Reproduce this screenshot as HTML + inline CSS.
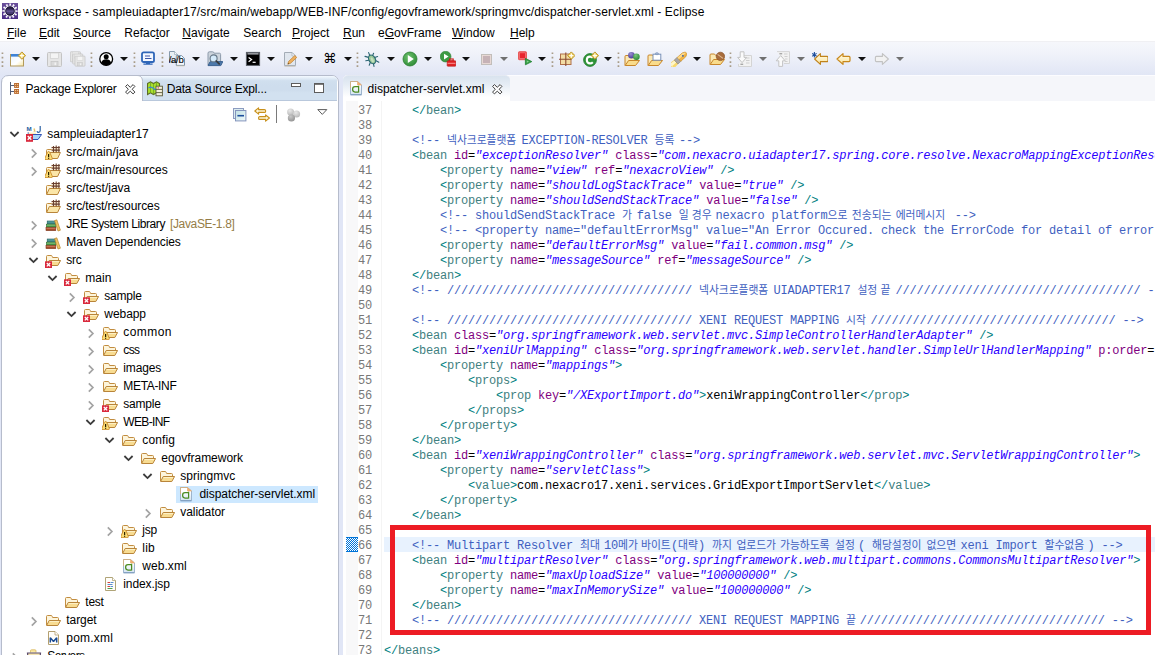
<!DOCTYPE html>
<html lang="ko"><head><meta charset="utf-8"><title>Eclipse</title>
<style>
*{box-sizing:border-box}
html,body{margin:0;padding:0}
body{width:1155px;height:655px;overflow:hidden;position:relative;background:#e1e6f6;font-family:"Liberation Sans","NanumGothic",sans-serif;font-size:12px;color:#000}
div,span,svg{position:absolute}
.cl span,.tx span{position:static}
#title{left:0;top:0;width:1155px;height:22px;background:#fff}
#title .tt{left:23px;top:5px;line-height:14px;white-space:nowrap;letter-spacing:0.13px}
#menu{left:0;top:22px;width:1155px;height:19px;background:#fff}
#menu span{top:4px;line-height:14px;white-space:nowrap}
#menu u{text-decoration:underline;text-underline-offset:1px}
#tb{left:0;top:41px;width:1155px;height:34px;background:linear-gradient(#f6f7fb 0,#f1f3fa 30%,#e1e6f5 100%);border-top:1px solid #f0f0f3}
#tb svg{top:9px}
.grip{position:absolute;width:2px;height:16px;top:9.5px;background:repeating-linear-gradient(#aca08c 0 1.6px,transparent 1.6px 4.6px)}
#tb svg.dd{top:15px}
/* left panel */
#lp{left:1px;top:75px;width:338px;height:590px;background:#fff;border:1px solid #b6bccc;border-radius:7px 7px 0 0;overflow:hidden}
#lp .strip{left:0;top:0;width:335px;height:25px;background:linear-gradient(#f3f9ff 0,#d0dfee 20%,#cedded 45%,#cedded 60%,#d2e1f0 70%,#d2e1f0 100%)}
#lp .strip{border-bottom:1px solid #b9c8dc}
#lp svg.tab{left:-1px;top:-1px}
.tx{white-space:nowrap;line-height:18px;top:0;height:18px}
.tr{left:0;width:340px;height:18px}
.tr .ic{top:1px;width:16px;height:16px}
.tr .ic svg{left:0;top:0}
.tr .ar{top:5px}
.tr svg.ar[height="11"]{top:4.5px}
.selbg{position:absolute;top:0.5px;width:142px;height:17px;background:#cde8ff}
.dec{color:#957d47;margin-left:2px}
/* editor */
#ed{left:343px;top:75px;width:820px;height:590px;background:#fff;border-radius:5px 0 0 0;overflow:hidden}
#edstrip{left:343px;top:75px;width:812px;height:26px;background:#f5f6fa;border-top:1px solid #fcfcff;border-radius:5px 0 0 0}
#edtab{left:343px;top:75px;width:167px;height:26px;background:linear-gradient(#d9e3ee 0,#e6edf5 35%,#fff 85%);border-radius:5px 5px 0 0;border-top:1px solid #e4e9f2}
#ruler{left:346px;top:101px;width:12px;height:560px;background:#f8f8f9}
#lnsep{left:381px;top:101px;width:1px;height:560px;background:#f4f4f4}
.ln{left:358px;width:14px;height:15px;line-height:15px;font-family:"Liberation Mono",monospace;font-size:12px;letter-spacing:-0.2px;color:#787878;white-space:pre}
.cl{height:15px;line-height:15px;font-family:"Liberation Mono","NanumGothic",monospace;font-size:12px;letter-spacing:-0.2px;white-space:pre;color:#000}
.c{color:#3f5fbf}.b{color:#008080}.t{color:#3f7f7f}.a{color:#7f007f}.v{color:#2a00ff;font-style:italic}
.cl span.k{display:inline-block;position:relative;top:0px;font-family:"Liberation Mono","Noto Sans CJK KR","NanumGothic",monospace;font-size:10.8px;letter-spacing:-0.05px;white-space:pre;vertical-align:top;height:15px;line-height:15px;overflow:visible}
#curline{left:384px;top:537px;width:780px;height:15px;background:#e8f2fe}
#mark{left:346px;top:537px;width:12px;height:15px;background-color:#0074d9;background-image:conic-gradient(#fff 25%,transparent 0 50%,#fff 0 75%,transparent 0);background-size:2px 2px;background-position:0 1px;border-top:1px solid #0074d9;border-bottom:1px solid #0074d9}
#red{left:390px;top:525px;width:761px;height:110px;border:5px solid #ed1c24}
</style></head><body>
<div id="title">
<svg style="left:2px;top:3px" width="16" height="16" viewBox="0 0 16 16"><defs><linearGradient id="gec" x1="0" y1="0" x2="0" y2="1"><stop offset="0" stop-color="#6a4f9a"/><stop offset="1" stop-color="#4a2c86"/></linearGradient></defs><rect width="16" height="16" fill="url(#gec)"/><circle cx="8" cy="8" r="6.6" fill="none" stroke="#fff" stroke-width="2" stroke-dasharray="1.728 1.728" stroke-dashoffset="0.864"/><circle cx="8" cy="8" r="5.6" fill="#fff"/><circle cx="8" cy="8" r="4.5" fill="#2a2148"/><path d="M4 7.2 H12 M3.8 8.6 H12.2 M4.2 10 H11.8" stroke="#7a68b0" stroke-width="0.8"/><circle cx="8" cy="8" r="4.3" fill="none" stroke="#1e1838" stroke-width="0.9"/></svg>
<span class="tt">workspace - sampleuiadapter17/src/main/webapp/WEB-INF/config/egovframework/springmvc/dispatcher-servlet.xml - Eclipse</span>
</div>
<div id="menu">
<span style="left:7px"><u>F</u>ile</span><span style="left:39px"><u>E</u>dit</span><span style="left:73px"><u>S</u>ource</span><span style="left:124.3px">Refac<u>t</u>or</span><span style="left:182.3px"><u>N</u>avigate</span><span style="left:243.3px">Search</span><span style="left:292px"><u>P</u>roject</span><span style="left:343px"><u>R</u>un</span><span style="left:378px">e<u>G</u>ovFrame</span><span style="left:452px"><u>W</u>indow</span><span style="left:510px"><u>H</u>elp</span>
</div>
<div id="tb">
<svg style="left:1.2px" width="3" height="16" viewBox="0 0 3 16"><path d="M0.6 1.4h1.7v1.7h-1.7z M0.6 5.8h1.7v1.7h-1.7z M0.6 10.2h1.7v1.7h-1.7z M0.6 14.3h1.7v1.7h-1.7z" fill="#a89c88"/></svg>
<svg style="left:10px" width="16" height="16" viewBox="0 0 16 16"><defs><linearGradient id="gnw" x1="0" y1="0" x2="1" y2="1"><stop offset="0" stop-color="#eaf4ff"/><stop offset="0.6" stop-color="#fff"/><stop offset="1" stop-color="#f7e6a0"/></linearGradient></defs><rect x="0.5" y="3.5" width="13" height="11.5" fill="url(#gnw)" stroke="#b39a5c"/><rect x="1" y="3" width="12" height="2.6" fill="#3d82d6"/><path d="M8.2 4.6 l3.7 -3.7 l3.7 3.7 l-3.7 3.7 z" fill="#ecc850" stroke="#b8922a" stroke-width="0.9"/><path d="M9.8 4.6 h4.2 M11.9 2.5 v4.2" stroke="#fffef4" stroke-width="1.3"/></svg>
<svg class="dd" style="left:32px" width="8" height="4" viewBox="0 0 8 4"><path d="M0 0 H8 L4 4Z" fill="#111"/></svg>
<svg style="left:47px" width="16" height="16" viewBox="0 0 16 16"><path d="M1.5 1.5 h12 q1 0 1 1 v12 q0 1 -1 1 h-12 q-1 0 -1 -1 v-12 q0 -1 1 -1z" fill="#e6e6e6" stroke="#c4c4c4"/><rect x="3.5" y="2" width="8" height="5.5" fill="#f4f4f4" stroke="#cfcfcf" stroke-width="0.7"/><rect x="4" y="10.5" width="7" height="4.5" fill="#dadada" stroke="#c4c4c4" stroke-width="0.7"/><rect x="7.5" y="11.5" width="1.6" height="2.6" fill="#f2f2f2"/></svg>
<svg style="left:70px" width="16" height="16" viewBox="0 0 16 16"><g transform="scale(0.72)"><path d="M1.5 1 h12 q1 0 1 1 v12 q0 1 -1 1 h-12 q-1 0 -1 -1 v-12 q0 -1 1 -1z" fill="#e6e6e6" stroke="#c4c4c4"/><rect x="3.5" y="1.5" width="8" height="5.5" fill="#f4f4f4" stroke="#cfcfcf" stroke-width="0.7"/><rect x="4" y="10" width="7" height="4.5" fill="#dadada" stroke="#c4c4c4" stroke-width="0.7"/><rect x="7.5" y="11" width="1.6" height="2.6" fill="#f2f2f2"/></g><g transform="translate(2.3,2.2) scale(0.72)"><path d="M1.5 1 h12 q1 0 1 1 v12 q0 1 -1 1 h-12 q-1 0 -1 -1 v-12 q0 -1 1 -1z" fill="#e6e6e6" stroke="#c4c4c4"/><rect x="3.5" y="1.5" width="8" height="5.5" fill="#f4f4f4" stroke="#cfcfcf" stroke-width="0.7"/><rect x="4" y="10" width="7" height="4.5" fill="#dadada" stroke="#c4c4c4" stroke-width="0.7"/><rect x="7.5" y="11" width="1.6" height="2.6" fill="#f2f2f2"/></g><g transform="translate(4.6,4.4) scale(0.72)"><path d="M1.5 1 h12 q1 0 1 1 v12 q0 1 -1 1 h-12 q-1 0 -1 -1 v-12 q0 -1 1 -1z" fill="#e6e6e6" stroke="#c4c4c4"/><rect x="3.5" y="1.5" width="8" height="5.5" fill="#f4f4f4" stroke="#cfcfcf" stroke-width="0.7"/><rect x="4" y="10" width="7" height="4.5" fill="#dadada" stroke="#c4c4c4" stroke-width="0.7"/><rect x="7.5" y="11" width="1.6" height="2.6" fill="#f2f2f2"/></g></svg>
<svg style="left:90.2px" width="3" height="16" viewBox="0 0 3 16"><path d="M0.6 1.4h1.7v1.7h-1.7z M0.6 5.8h1.7v1.7h-1.7z M0.6 10.2h1.7v1.7h-1.7z M0.6 14.3h1.7v1.7h-1.7z" fill="#a89c88"/></svg>
<svg style="left:99px" width="16" height="16" viewBox="0 0 16 16"><circle cx="7.2" cy="8" r="6.4" fill="#fff" stroke="#000" stroke-width="1.3"/><circle cx="7.2" cy="5.8" r="2.5" fill="#000"/><path d="M2.3 12 Q2.8 8.2 7.2 8.2 Q11.6 8.2 12.1 12 Q10 14.4 7.2 14.4 Q4.4 14.4 2.3 12Z" fill="#000"/></svg>
<svg class="dd" style="left:120px" width="8" height="4" viewBox="0 0 8 4"><path d="M0 0 H8 L4 4Z" fill="#111"/></svg>
<svg style="left:132.7px" width="3" height="16" viewBox="0 0 3 16"><path d="M0.6 1.4h1.7v1.7h-1.7z M0.6 5.8h1.7v1.7h-1.7z M0.6 10.2h1.7v1.7h-1.7z M0.6 14.3h1.7v1.7h-1.7z" fill="#a89c88"/></svg>
<svg style="left:141px" width="16" height="16" viewBox="0 0 16 16"><rect x="1" y="1.4" width="12" height="9.6" rx="1.6" fill="#f4f8ff" stroke="#2f66b8" stroke-width="1.8"/><path d="M4 5 H9 M4 7.5 H10.5" stroke="#3c55a8" stroke-width="1"/><path d="M5 11.5 H9 V12.6 H11.6 V13.8 H2.4 V12.6 H5Z" fill="#2f66b8"/></svg>
<svg style="left:160.7px" width="3" height="16" viewBox="0 0 3 16"><path d="M0.6 1.4h1.7v1.7h-1.7z M0.6 5.8h1.7v1.7h-1.7z M0.6 10.2h1.7v1.7h-1.7z M0.6 14.3h1.7v1.7h-1.7z" fill="#a89c88"/></svg>
<svg style="left:169px" width="16" height="16" viewBox="0 0 16 16"><path d="M0.5 0.5 H5.5 L8.5 3.5 V11 H0.5Z" fill="#e8eef4" stroke="#7c90a4" stroke-width="0.9"/><path d="M5.5 0.5 V3.5 H8.5" fill="#f8fafc" stroke="#9cacbc" stroke-width="0.7"/><path d="M7.3 4.6 H12.6 L15.5 7.4 V14.4 H7.3Z" fill="#f6f9fc" stroke="#74889c" stroke-width="0.9"/><path d="M7.3 15 H15.5" stroke="#d8ccb0" stroke-width="0.6"/><text x="-0.3" y="12.4" font-family="Liberation Sans,sans-serif" font-size="9.6" fill="#000" stroke="#000" stroke-width="0.1" letter-spacing="-0.3">/a/b</text></svg>
<svg class="dd" style="left:192px" width="8" height="4" viewBox="0 0 8 4"><path d="M0 0 H8 L4 4Z" fill="#111"/></svg>
<svg style="left:207px" width="16" height="16" viewBox="0 0 16 16"><path d="M1 14 V2.2 Q1 0.8 2.4 0.8 H5.6 Q6.8 0.8 7.2 2.2 H12.4 Q13.6 2.2 13.6 3.4 V11" fill="#ccd4dc" stroke="#8c9aaa"/><path d="M1 14.6 L3.2 10.6 H15.8 L13.8 14.6Z" fill="#4d79aa" stroke="#3c6290" stroke-linejoin="round"/><circle cx="6.6" cy="7.4" r="3.5" fill="#d4eafa" stroke="#667888" stroke-width="1.1"/><path d="M9.2 10 L12.2 12.8" stroke="#3a3a3a" stroke-width="1.7" stroke-linecap="round"/></svg>
<svg class="dd" style="left:230px" width="8" height="4" viewBox="0 0 8 4"><path d="M0 0 H8 L4 4Z" fill="#111"/></svg>
<svg style="left:245px" width="16" height="16" viewBox="0 0 16 16"><rect x="1.4" y="1.4" width="13.2" height="13" fill="#000" stroke="#5a6068" stroke-width="1"/><rect x="2.4" y="2.2" width="11.2" height="1.3" fill="#b8bcc4"/><path d="M3.6 6.4 L6.6 8.6 L3.6 10.8" fill="none" stroke="#fff" stroke-width="1.2"/><path d="M7.6 11.3 H10.6" stroke="#fff" stroke-width="1.2"/></svg>
<svg class="dd" style="left:267px" width="8" height="4" viewBox="0 0 8 4"><path d="M0 0 H8 L4 4Z" fill="#111"/></svg>
<svg style="left:283px" width="16" height="16" viewBox="0 0 16 16"><path d="M1.5 1.5 H9 L12.5 5 V14.5 H1.5Z" fill="#e0e6ee" stroke="#a4acb6"/><path d="M9 1.5 V5 H12.5Z" fill="#fafcff" stroke="#a4acb6" stroke-width="0.7"/><path d="M1.5 15.3 H12.5" stroke="#c8c4b8" stroke-width="0.9"/><path d="M11.8 4.6 L13.8 6.4 L7.6 12.2 L4.8 13.2 L5.6 10.4Z" fill="#eeb060" stroke="#c48838" stroke-width="0.8"/><path d="M4.8 13.2 L5.2 11.8 L6.2 12.8Z" fill="#6a4a20"/></svg>
<svg class="dd" style="left:305px" width="8" height="4" viewBox="0 0 8 4"><path d="M0 0 H8 L4 4Z" fill="#111"/></svg>
<span style="position:absolute;left:323px;top:8px;font:13.5px 'DejaVu Sans',sans-serif;line-height:16px;color:#000">⌘</span>
<svg class="dd" style="left:344px" width="8" height="4" viewBox="0 0 8 4"><path d="M0 0 H8 L4 4Z" fill="#111"/></svg>
<svg style="left:355.7px" width="3" height="16" viewBox="0 0 3 16"><path d="M0.6 1.4h1.7v1.7h-1.7z M0.6 5.8h1.7v1.7h-1.7z M0.6 10.2h1.7v1.7h-1.7z M0.6 14.3h1.7v1.7h-1.7z" fill="#a89c88"/></svg>
<svg style="left:364px" width="16" height="16" viewBox="0 0 16 16"><g stroke="#2c6474" stroke-width="1.1" fill="none" stroke-linecap="round"><path d="M6 5 L4.6 1.6 M8.6 4.4 L9.6 2.2 M4.6 6.4 L1 5.4 M10.6 6.6 L13.6 5.6 M4.8 9.2 L1.8 9.8 M11.6 9.4 L14.8 11.2 M6.2 11.8 L5.2 14.2 M9.4 12.6 L10 15.4"/></g><ellipse cx="8.1" cy="8.4" rx="3.2" ry="4.6" transform="rotate(-28 8.1 8.4)" fill="#9cc89a" stroke="#2c6c74" stroke-width="1.2"/><ellipse cx="8.3" cy="8.9" rx="1.2" ry="2.6" transform="rotate(-28 8.3 8.9)" fill="#c4e0be"/></svg>
<svg class="dd" style="left:387px" width="8" height="4" viewBox="0 0 8 4"><path d="M0 0 H8 L4 4Z" fill="#111"/></svg>
<svg style="left:402px" width="16" height="16" viewBox="0 0 16 16"><defs><radialGradient id="grn" cx="0.4" cy="0.35" r="0.7"><stop offset="0" stop-color="#6cc06c"/><stop offset="1" stop-color="#2e8c36"/></radialGradient></defs><circle cx="8" cy="8" r="7" fill="url(#grn)" stroke="#2a7e30" stroke-width="0.8"/><path d="M5.8 4 L11.8 8 L5.8 12Z" fill="#fff"/></svg>
<svg class="dd" style="left:424px" width="8" height="4" viewBox="0 0 8 4"><path d="M0 0 H8 L4 4Z" fill="#111"/></svg>
<svg style="left:440px" width="16" height="16" viewBox="0 0 16 16"><circle cx="5.6" cy="5.6" r="5.4" fill="#3d9a44" stroke="#2a7e30" stroke-width="0.6"/><path d="M4 2.8 L8.6 5.6 L4 8.4Z" fill="#fff"/><rect x="9.6" y="8" width="3.6" height="2" fill="none" stroke="#d01818" stroke-width="1.1"/><rect x="7.2" y="9.8" width="8.6" height="5.4" rx="0.6" fill="#e02424" stroke="#b81010" stroke-width="0.6"/><path d="M7.6 12.3 H15.4" stroke="#ffb0b0" stroke-width="0.8"/></svg>
<svg class="dd" style="left:462px" width="8" height="4" viewBox="0 0 8 4"><path d="M0 0 H8 L4 4Z" fill="#111"/></svg>
<svg style="left:479px" width="16" height="16" viewBox="0 0 16 16"><rect x="2.5" y="3.5" width="10" height="10" fill="#c6b2b6" stroke="#c2beba"/><rect x="3.5" y="4.5" width="8" height="8" fill="none" stroke="#ecdcd8" stroke-width="0.9"/></svg>
<svg class="dd" style="left:500px" width="8" height="4" viewBox="0 0 8 4"><path d="M0 0 H8 L4 4Z" fill="#707070"/></svg>
<svg style="left:517px" width="16" height="16" viewBox="0 0 16 16"><rect x="1.5" y="0.7" width="8" height="8" rx="0.8" fill="#e8242c" stroke="#e85a5a"/><rect x="2.6" y="1.8" width="5.8" height="5.8" fill="none" stroke="#f48a8a" stroke-width="0.7"/><path d="M8.4 7.4 L14.8 10.6 L8.4 13.8Z" fill="#36a046" stroke="#1e8030" stroke-width="0.8"/><path d="M9.8 9.6 L12 10.6 L9.8 11.8Z" fill="#8ad090"/></svg>
<svg class="dd" style="left:538px" width="8" height="4" viewBox="0 0 8 4"><path d="M0 0 H8 L4 4Z" fill="#111"/></svg>
<svg style="left:550.7px" width="3" height="16" viewBox="0 0 3 16"><path d="M0.6 1.4h1.7v1.7h-1.7z M0.6 5.8h1.7v1.7h-1.7z M0.6 10.2h1.7v1.7h-1.7z M0.6 14.3h1.7v1.7h-1.7z" fill="#a89c88"/></svg>
<svg style="left:559px" width="16" height="16" viewBox="0 0 16 16"><rect x="1.5" y="3" width="10.5" height="10.5" fill="#f2dca4" stroke="#b0704a"/><path d="M0 8.2 H12.5 M6.8 1.5 V15" stroke="#8a4a30" stroke-width="1.1"/><path d="M8.6 4.6 l3.7 -3.7 l3.7 3.7 l-3.7 3.7 z" fill="#ecc850" stroke="#b8922a" stroke-width="0.9"/><path d="M10.2 4.6 h4.2 M12.3 2.5 v4.2" stroke="#fffef4" stroke-width="1.3"/></svg>
<svg style="left:583px" width="16" height="16" viewBox="0 0 16 16"><circle cx="7" cy="9" r="6.4" fill="#2e9438" stroke="#1e7a2a" stroke-width="0.8"/><path d="M9.8 6.8 Q8.6 5.6 7 5.6 Q3.8 5.6 3.8 9 Q3.8 12.4 7 12.4 Q8.6 12.4 9.8 11.2" fill="none" stroke="#fff" stroke-width="2.1"/><path d="M8.2 4.6 l3.7 -3.7 l3.7 3.7 l-3.7 3.7 z" fill="#ecc850" stroke="#b8922a" stroke-width="0.9"/><path d="M9.8 4.6 h4.2 M11.9 2.5 v4.2" stroke="#fffef4" stroke-width="1.3"/></svg>
<svg class="dd" style="left:604px" width="8" height="4" viewBox="0 0 8 4"><path d="M0 0 H8 L4 4Z" fill="#111"/></svg>
<svg style="left:616.7px" width="3" height="16" viewBox="0 0 3 16"><path d="M0.6 1.4h1.7v1.7h-1.7z M0.6 5.8h1.7v1.7h-1.7z M0.6 10.2h1.7v1.7h-1.7z M0.6 14.3h1.7v1.7h-1.7z" fill="#a89c88"/></svg>
<svg style="left:624px" width="16" height="16" viewBox="0 0 16 16"><path d="M1 14.5 V5.5 Q1 4.5 2 4.5 H5.5 L6.8 6 H12 Q13 6 13 7 V9.5" fill="#fbe9b4" stroke="#c8862a"/><path d="M1.2 14.5 L4.6 9.5 H15.5 L11.5 14.5 Z" fill="#f9dc8c" stroke="#c8862a" stroke-linejoin="round"/><defs><radialGradient id="gpu" cx="0.4" cy="0.3" r="0.7"><stop offset="0" stop-color="#9a90d0"/><stop offset="1" stop-color="#4a3c98"/></radialGradient><radialGradient id="ggr" cx="0.4" cy="0.3" r="0.7"><stop offset="0" stop-color="#7cc47c"/><stop offset="1" stop-color="#2a8a38"/></radialGradient></defs><circle cx="7.4" cy="4.2" r="3.3" fill="url(#gpu)"/><circle cx="12.4" cy="5.8" r="3.3" fill="url(#ggr)"/></svg>
<svg style="left:647px" width="16" height="16" viewBox="0 0 16 16"><path d="M1 14.5 V5 Q1 4 2 4 H5.5 L6.8 5.5 H12 Q13 5.5 13 6.5 V9.5" fill="#fbe9b4" stroke="#c8862a"/><path d="M1.2 14.5 L4.6 9.5 H15.5 L11.5 14.5 Z" fill="#f9dc8c" stroke="#c8862a" stroke-linejoin="round"/><rect x="6" y="3.2" width="7.8" height="6" fill="#fff" stroke="#7a92ba" stroke-width="1"/><rect x="8.4" y="1.8" width="3" height="1.8" rx="0.8" fill="#a8b8d4" stroke="#7a92ba" stroke-width="0.7"/></svg>
<svg style="left:671px" width="16" height="16" viewBox="0 0 16 16"><g transform="translate(8.2,8.2) rotate(-42)"><path d="M-10.4 -3 L-4 -2.5 V2.5 L-10.4 3 Q-11.2 0 -10.4 -3Z" fill="#fff6c8" stroke="#f0cc60" stroke-width="0.7"/><path d="M-9.8 0.4 L-4 0.6 V2.4 L-10.2 2.8Z" fill="#f8d86c"/><rect x="-4.2" y="-2.7" width="4" height="5.4" fill="#aaa6a4" stroke="#8c8478" stroke-width="0.6"/><path d="M-0.2 -2.6 H6.4 L9.4 -1.2 V1.2 L6.4 2.6 H-0.2Z" fill="#f2b444" stroke="#cf9430" stroke-width="0.7"/><path d="M-0.2 -2.3 H6.4 L9 -1 V-0.2 H-0.2Z" fill="#fbd88a"/><circle cx="5" cy="0" r="0.9" fill="#2f5cb0"/></g></svg>
<svg class="dd" style="left:693px" width="8" height="4" viewBox="0 0 8 4"><path d="M0 0 H8 L4 4Z" fill="#111"/></svg>
<svg style="left:709px" width="16" height="16" viewBox="0 0 16 16"><path d="M1 13.5 V4 Q1 3 2 3 H5.5 L6.8 4.5 H12 Q13 4.5 13 5.5 V8.5" fill="#fbe9b4" stroke="#c8862a"/><path d="M1.2 13.5 L4.6 8.5 H15.5 L11.5 13.5 Z" fill="#f9dc8c" stroke="#c8862a" stroke-linejoin="round"/><circle cx="11.4" cy="5.4" r="4.2" fill="#a86c3c" stroke="#8a5228" stroke-width="0.7"/><path d="M8.6 3.4 L14 7.4" stroke="#e0b890" stroke-width="1.1"/></svg>
<svg style="left:728.7px" width="3" height="16" viewBox="0 0 3 16"><path d="M0.6 1.4h1.7v1.7h-1.7z M0.6 5.8h1.7v1.7h-1.7z M0.6 10.2h1.7v1.7h-1.7z M0.6 14.3h1.7v1.7h-1.7z" fill="#a89c88"/></svg>
<svg style="left:737px" width="16" height="16" viewBox="0 0 16 16"><path d="M7 4.5 H14.5 V15.5 H1.5 V13" fill="#f2f2f2" stroke="#d4d4d4"/><path d="M8.5 7 H12.5 M9 9.5 H12.5 M9 12 H12.5" stroke="#cfcfcf"/><rect x="3.4" y="12.6" width="2.8" height="1.4" fill="#a8a8a8"/><path d="M3.2 0.8 H7 V6.4 H9.6 L5.1 11.6 L0.6 6.4 H3.2Z" fill="#fafafa" stroke="#c4c4c4"/></svg>
<svg class="dd" style="left:759px" width="8" height="4" viewBox="0 0 8 4"><path d="M0 0 H8 L4 4Z" fill="#707070"/></svg>
<svg style="left:775px" width="16" height="16" viewBox="0 0 16 16"><path d="M2 0.6 H14.5 V12.5 H9" fill="#f2f2f2" stroke="#d4d4d4"/><path d="M9 3 H12.5 M9.5 5.5 H12.5 M10 8 H12.5 M10 10.5 H12.5" stroke="#cfcfcf"/><rect x="4.4" y="2" width="2.8" height="1.4" fill="#a8a8a8"/><path d="M3.8 15.4 H7.6 V9.8 H10.2 L5.7 4.6 L1.2 9.8 H3.8Z" fill="#fafafa" stroke="#c4c4c4"/></svg>
<svg class="dd" style="left:797px" width="8" height="4" viewBox="0 0 8 4"><path d="M0 0 H8 L4 4Z" fill="#707070"/></svg>
<svg style="left:812px" width="16" height="16" viewBox="0 0 16 16"><defs><linearGradient id="gye" x1="0" y1="0" x2="0" y2="1"><stop offset="0" stop-color="#fffbe8"/><stop offset="1" stop-color="#fbe49a"/></linearGradient></defs><path d="M2.6 8 L8.4 2.6 V5.4 H15 Q16 5.4 16 6.4 V9.6 Q16 10.6 15 10.6 H8.4 V13.4Z" fill="url(#gye)" stroke="#c0821a" stroke-width="1.1" stroke-linejoin="round"/><path d="M2.4 1 V6.6 M0.2 2.4 L4.6 5.2 M4.6 2.4 L0.2 5.2" stroke="#1c4e9c" stroke-width="1.1"/></svg>
<svg style="left:836px" width="16" height="16" viewBox="0 0 16 16"><defs><linearGradient id="gyb" x1="0" y1="0" x2="0" y2="1"><stop offset="0" stop-color="#fffbe8"/><stop offset="1" stop-color="#fbe49a"/></linearGradient></defs><path d="M1 8 L7 2.6 V5.4 H13 Q14 5.4 14 6.4 V9.6 Q14 10.6 13 10.6 H7 V13.4Z" fill="url(#gyb)" stroke="#c8881c" stroke-width="1.2" stroke-linejoin="round"/></svg>
<svg class="dd" style="left:858px" width="8" height="4" viewBox="0 0 8 4"><path d="M0 0 H8 L4 4Z" fill="#111"/></svg>
<svg style="left:874px" width="16" height="16" viewBox="0 0 16 16"><g transform="translate(15.4,0) scale(-1,1)"><path d="M1 8 L7 2.6 V5.4 H13 Q14 5.4 14 6.4 V9.6 Q14 10.6 13 10.6 H7 V13.4Z" fill="#f2f2f2" stroke="#c2c2c2" stroke-width="1.1" stroke-linejoin="round"/></g></svg>
<svg class="dd" style="left:896px" width="8" height="4" viewBox="0 0 8 4"><path d="M0 0 H8 L4 4Z" fill="#707070"/></svg>
</div>
<div id="lp">
<div class="strip"></div>
<svg class="tab" width="146" height="28" viewBox="0 0 146 28"><path d="M0 28 V8 Q0.5 0.5 8 0.5 H136 C139.5 0.5 141.5 2.5 141.5 6.5 V28Z" fill="#fff"/><path d="M0.5 28 V8 Q0.5 0.5 8 0.5 H136 C139.5 0.5 141.5 2.5 141.5 6.5 V26" fill="none" stroke="#b6bccc"/></svg>
</div>
<div id="lptabs">
<svg style="left:9px;top:81px" width="12" height="15" viewBox="0 0 12 15"><path d="M1.5 1 V14 M1.5 4.5 H5.2 M1.5 10.5 H5.2" stroke="#566078" stroke-width="1" fill="none"/><rect x="5.1" y="2" width="4.9" height="4.9" fill="#b8682c"/><rect x="6.1" y="2.9" width="1.1" height="1.1" fill="#f4cc98"/><rect x="6.1" y="4.9" width="1.1" height="1.1" fill="#f4cc98"/><rect x="8.1" y="2.9" width="1.1" height="1.1" fill="#f4cc98"/><rect x="8.1" y="4.9" width="1.1" height="1.1" fill="#f4cc98"/><rect x="5.1" y="8" width="4.9" height="4.9" fill="#b8682c"/><rect x="6.1" y="8.9" width="1.1" height="1.1" fill="#f4cc98"/><rect x="6.1" y="10.9" width="1.1" height="1.1" fill="#f4cc98"/><rect x="8.1" y="8.9" width="1.1" height="1.1" fill="#f4cc98"/><rect x="8.1" y="10.9" width="1.1" height="1.1" fill="#f4cc98"/></svg>
<span class="tx" style="left:25.5px;top:80px;letter-spacing:-0.23px">Package Explorer</span>
<svg style="left:124.5px;top:83.7px" width="11" height="11" viewBox="0 0 11 11"><path d="M0.6 2.4 L2.4 0.6 L5.25 3.3 L8.1 0.6 L9.9 2.4 L7.2 5.25 L9.9 8.1 L8.1 9.9 L5.25 7.2 L2.4 9.9 L0.6 8.1 L3.3 5.25Z" fill="#fff" stroke="#3e3e3e" stroke-width="1" stroke-linejoin="miter"/></svg>
<svg style="left:147px;top:81px" width="16" height="16" viewBox="0 0 16 16"><path d="M0.5 2.5 L3.5 0.8 L6.5 2.5 L9.5 0.8 L12.5 2.5 V13.5 L9.5 11.8 L6.5 13.5 L3.5 11.8 L0.5 13.5Z" fill="#a8e02c" stroke="#5c6c26" stroke-width="1.1"/><path d="M3.5 0.8 V11.8 M6.5 2.5 V13.5 M9.5 0.8 V11.8" stroke="#6a9a1c" stroke-width="0.7"/><path d="M1.5 7 Q4 5 6.5 7.5 T11 7" stroke="#3a8ad0" stroke-width="1.2" fill="none"/><rect x="9" y="5.2" width="6.4" height="9.6" fill="#f4f0dc" stroke="#5a5a3a" stroke-width="0.9"/><path d="M9 8.4 H15.4 M9 11.6 H15.4" stroke="#5a5a3a" stroke-width="0.9"/><rect x="10.6" y="6.4" width="1.4" height="1" fill="#d03030"/></svg>
<span class="tx" style="left:166.7px;top:80px;letter-spacing:-0.17px">Data Source Expl...</span>
<svg style="left:291px;top:83px" width="10" height="4" viewBox="0 0 10 4"><rect x="0.5" y="0.5" width="9" height="3" fill="#fff" stroke="#5c5c5c"/></svg>
<svg style="left:314px;top:83px" width="10" height="10" viewBox="0 0 10 10"><rect x="0.5" y="0.5" width="9" height="9" fill="#fff" stroke="#5c5c5c"/><path d="M0 1.2 H10" stroke="#5c5c5c" stroke-width="1.2"/></svg>
<svg style="left:233px;top:107.8px" width="14" height="14" viewBox="0 0 14 14"><defs><linearGradient id="gcl" x1="0" y1="0" x2="1" y2="1"><stop offset="0" stop-color="#bfe0e4"/><stop offset="1" stop-color="#f2fafa"/></linearGradient></defs><rect x="0.5" y="0.5" width="10" height="10" fill="#dcecf0" stroke="#8c9cc0"/><rect x="2.5" y="2.5" width="10.4" height="10.4" fill="url(#gcl)" stroke="#8494bc"/><path d="M4.4 7.7 H11" stroke="#1c4e9c" stroke-width="1.6"/></svg>
<svg style="left:254px;top:106.6px" width="16" height="15" viewBox="0 0 16 15"><path d="M0.8 4 L4.6 0.8 V2.6 H10.4 Q11.6 2.6 11.6 3.6 V4.4 Q11.6 5.4 10.4 5.4 H4.6 V7.2Z" fill="#fdf6d8" stroke="#c8901c" stroke-width="1.1" stroke-linejoin="round"/><path d="M15.4 11 L11.6 7.8 V9.6 H5.8 Q4.6 9.6 4.6 10.6 V11.4 Q4.6 12.4 5.8 12.4 H11.6 V14.2Z" fill="#fdf6d8" stroke="#c8901c" stroke-width="1.1" stroke-linejoin="round"/></svg>
<i style="position:absolute;left:276px;top:105px;width:1px;height:18px;background:#7a7a7a"></i>
<svg style="left:286px;top:107.5px" width="15" height="14" viewBox="0 0 15 14"><defs><radialGradient id="gb1" cx="0.4" cy="0.3" r="0.8"><stop offset="0" stop-color="#e8e8e8"/><stop offset="1" stop-color="#b4b4b4"/></radialGradient><radialGradient id="gb2" cx="0.4" cy="0.3" r="0.8"><stop offset="0" stop-color="#c8c8c8"/><stop offset="1" stop-color="#8c8c8c"/></radialGradient></defs><circle cx="4.6" cy="4" r="3.5" fill="url(#gb1)"/><circle cx="10.6" cy="6" r="3.5" fill="url(#gb1)"/><circle cx="5.4" cy="10" r="3.6" fill="url(#gb2)"/></svg>
<svg style="left:316.5px;top:109px" width="11" height="6" viewBox="0 0 11 6"><path d="M0.8 0.6 H9.8 L5.3 5.4Z" fill="#fff" stroke="#4a4a4a" stroke-width="0.9"/></svg>
</div>
<div id="treewrap" style="left:0;top:0;width:338px;height:655px;overflow:hidden">
<div class="tr" style="top:125px"><svg class="ar" style="left:9px" width="11" height="9" viewBox="0 0 11 9"><path d="M1.4 2 L5.5 6.1 L9.6 2" fill="none" stroke="#3c3c3c" stroke-width="1.8"/></svg><span class="ic" style="left:26px"><svg width="16" height="16" viewBox="0 0 16 16"><path d="M2.5 8.2 V6.6 H10 V8.2" fill="#fdf0c0" stroke="none"/><path d="M2.2 8.4 V6.2" stroke="#3050b0" stroke-width="0.8"/><path d="M6.5 8.5 H15.6 L12 13.5 H3 Z" fill="#a8d6fa" stroke="#3454b4" stroke-linejoin="round"/><text x="0.4" y="5" font-family="Liberation Sans,sans-serif" font-size="6.2" font-weight="bold" fill="#1c5c9c">M</text><path d="M7.4 3.2 L8.6 2.8 V5 M7.6 5.2 H9.6" stroke="#d8b040" stroke-width="0.8" fill="none"/><path d="M14.2 0 V4.6 Q14.2 6.4 12.6 6.4 Q11.4 6.4 11 5.2" fill="none" stroke="#2c62a4" stroke-width="1.2"/><rect x="0" y="8" width="7" height="7.8" fill="#d9293d"/><path d="M1.7 10 L5.3 13.8 M5.3 10 L1.7 13.8" stroke="#fff" stroke-width="1.3"/></svg></span><span class="tx" style="left:47.3px;letter-spacing:-0.04px">sampleuiadapter17</span></div>
<div class="tr" style="top:143px"><svg class="ar" style="left:29px" width="9" height="11" viewBox="0 0 9 11"><path d="M2.8 1.4 L6.9 5.5 L2.8 9.6" fill="none" stroke="#a3a3a3" stroke-width="1.7"/></svg><span class="ic" style="left:45px"><svg width="16" height="16" viewBox="0 0 16 16"><path d="M1.5 14 V6.5 Q1.5 5.5 2.5 5.5 H7" fill="#fdf5dc" stroke="#c28d40"/><path d="M1.6 14.5 L4.4 8.5 H15.4 L12.6 14.5 Z" fill="#fbe6a8" stroke="#b9853a" stroke-linejoin="round"/><path d="M6.5 2.6 H14.5 V8 H6.5 Z" fill="#f6e6c8" stroke="none"/><path d="M6.6 3.4 H14.9 M6.6 6.1 H14.9 M8.5 2 V8.2 M11.2 1.6 V8.2 M13.9 2 V8.2" stroke="#6a4030" stroke-width="1.05" fill="none"/><path d="M3.6 7.5 Q4.4 7.5 4.8 8.4 L7.3 14.3 Q7.6 15.7 6.2 15.7 H1 Q-0.4 15.7 -0.1 14.3 L2.4 8.4 Q2.8 7.5 3.6 7.5Z" fill="#fbdc74" stroke="#c88a2c" stroke-width="0.9"/><path d="M3.6 10 V13" stroke="#2a2000" stroke-width="1.2"/><rect x="3" y="13.7" width="1.2" height="1.1" fill="#2a2000"/></svg></span><span class="tx" style="left:66.3px;letter-spacing:0.109px">src/main/java</span></div>
<div class="tr" style="top:161px"><svg class="ar" style="left:29px" width="9" height="11" viewBox="0 0 9 11"><path d="M2.8 1.4 L6.9 5.5 L2.8 9.6" fill="none" stroke="#a3a3a3" stroke-width="1.7"/></svg><span class="ic" style="left:45px"><svg width="16" height="16" viewBox="0 0 16 16"><path d="M1.5 14 V6.5 Q1.5 5.5 2.5 5.5 H7" fill="#fdf5dc" stroke="#c28d40"/><path d="M1.6 14.5 L4.4 8.5 H15.4 L12.6 14.5 Z" fill="#fbe6a8" stroke="#b9853a" stroke-linejoin="round"/><path d="M6.5 2.6 H14.5 V8 H6.5 Z" fill="#f6e6c8" stroke="none"/><path d="M6.6 3.4 H14.9 M6.6 6.1 H14.9 M8.5 2 V8.2 M11.2 1.6 V8.2 M13.9 2 V8.2" stroke="#6a4030" stroke-width="1.05" fill="none"/><path d="M3.6 7.5 Q4.4 7.5 4.8 8.4 L7.3 14.3 Q7.6 15.7 6.2 15.7 H1 Q-0.4 15.7 -0.1 14.3 L2.4 8.4 Q2.8 7.5 3.6 7.5Z" fill="#fbdc74" stroke="#c88a2c" stroke-width="0.9"/><path d="M3.6 10 V13" stroke="#2a2000" stroke-width="1.2"/><rect x="3" y="13.7" width="1.2" height="1.1" fill="#2a2000"/></svg></span><span class="tx" style="left:66.3px;letter-spacing:0.007px">src/main/resources</span></div>
<div class="tr" style="top:179px"><span class="ic" style="left:45px"><svg width="16" height="16" viewBox="0 0 16 16"><path d="M1.5 14 V6.5 Q1.5 5.5 2.5 5.5 H7" fill="#fdf5dc" stroke="#c28d40"/><path d="M1.6 14.5 L4.4 8.5 H15.4 L12.6 14.5 Z" fill="#fbe6a8" stroke="#b9853a" stroke-linejoin="round"/><path d="M6.5 2.6 H14.5 V8 H6.5 Z" fill="#f6e6c8" stroke="none"/><path d="M6.6 3.4 H14.9 M6.6 6.1 H14.9 M8.5 2 V8.2 M11.2 1.6 V8.2 M13.9 2 V8.2" stroke="#6a4030" stroke-width="1.05" fill="none"/></svg></span><span class="tx" style="left:66.3px;letter-spacing:-0.002px">src/test/java</span></div>
<div class="tr" style="top:197px"><span class="ic" style="left:45px"><svg width="16" height="16" viewBox="0 0 16 16"><path d="M1.5 14 V6.5 Q1.5 5.5 2.5 5.5 H7" fill="#fdf5dc" stroke="#c28d40"/><path d="M1.6 14.5 L4.4 8.5 H15.4 L12.6 14.5 Z" fill="#fbe6a8" stroke="#b9853a" stroke-linejoin="round"/><path d="M6.5 2.6 H14.5 V8 H6.5 Z" fill="#f6e6c8" stroke="none"/><path d="M6.6 3.4 H14.9 M6.6 6.1 H14.9 M8.5 2 V8.2 M11.2 1.6 V8.2 M13.9 2 V8.2" stroke="#6a4030" stroke-width="1.05" fill="none"/></svg></span><span class="tx" style="left:66.3px;letter-spacing:-0.078px">src/test/resources</span></div>
<div class="tr" style="top:215px"><svg class="ar" style="left:29px" width="9" height="11" viewBox="0 0 9 11"><path d="M2.8 1.4 L6.9 5.5 L2.8 9.6" fill="none" stroke="#a3a3a3" stroke-width="1.7"/></svg><span class="ic" style="left:45px"><svg width="16" height="16" viewBox="0 0 16 16"><rect x="2.2" y="5" width="8.2" height="2.8" fill="#2f8080" stroke="#1e5c5c" stroke-width="0.6"/><path d="M2.6 6 H10" stroke="#8fc4c4" stroke-width="0.6"/><rect x="1.4" y="8.2" width="9.4" height="2.8" fill="#4c9c48" stroke="#2f6e2c" stroke-width="0.6"/><path d="M1.8 9.2 H10.4" stroke="#a4d4a0" stroke-width="0.6"/><rect x="1" y="11.4" width="9.8" height="3.2" fill="#a84c2a" stroke="#7a3014" stroke-width="0.6"/><path d="M1.4 12.4 H10.4" stroke="#d89878" stroke-width="0.6"/><path d="M9.6 4.6 L11.8 3.8 L15.4 14.2 L13 15 Z" fill="#efc466" stroke="#b88428" stroke-width="0.7"/></svg></span><span class="tx" style="left:66.3px;letter-spacing:-0.407px">JRE System Library<span class="dec" style="letter-spacing:-0.35px"> [JavaSE-1.8]</span></span></div>
<div class="tr" style="top:233px"><svg class="ar" style="left:29px" width="9" height="11" viewBox="0 0 9 11"><path d="M2.8 1.4 L6.9 5.5 L2.8 9.6" fill="none" stroke="#a3a3a3" stroke-width="1.7"/></svg><span class="ic" style="left:45px"><svg width="16" height="16" viewBox="0 0 16 16"><rect x="2.2" y="5" width="8.2" height="2.8" fill="#2f8080" stroke="#1e5c5c" stroke-width="0.6"/><path d="M2.6 6 H10" stroke="#8fc4c4" stroke-width="0.6"/><rect x="1.4" y="8.2" width="9.4" height="2.8" fill="#4c9c48" stroke="#2f6e2c" stroke-width="0.6"/><path d="M1.8 9.2 H10.4" stroke="#a4d4a0" stroke-width="0.6"/><rect x="1" y="11.4" width="9.8" height="3.2" fill="#a84c2a" stroke="#7a3014" stroke-width="0.6"/><path d="M1.4 12.4 H10.4" stroke="#d89878" stroke-width="0.6"/><path d="M9.6 4.6 L11.8 3.8 L15.4 14.2 L13 15 Z" fill="#efc466" stroke="#b88428" stroke-width="0.7"/></svg></span><span class="tx" style="left:66.3px;letter-spacing:-0.093px">Maven Dependencies</span></div>
<div class="tr" style="top:251px"><svg class="ar" style="left:28px" width="11" height="9" viewBox="0 0 11 9"><path d="M1.4 2 L5.5 6.1 L9.6 2" fill="none" stroke="#3c3c3c" stroke-width="1.8"/></svg><span class="ic" style="left:45px"><svg width="16" height="16" viewBox="0 0 16 16"><path d="M1.5 13 V4.5 Q1.5 3.5 2.5 3.5 H6 Q7 3.5 7.3 4.5 L7.6 5.5 H12.5 Q13.5 5.5 13.5 6.5 V8.5" fill="#fdf5dc" stroke="#c28d40"/><path d="M1.6 13.5 L4.2 8.5 H15.6 L12.8 13.5 Z" fill="#f8dc92" stroke="#b9853a" stroke-linejoin="round"/><path d="M4.6 9.5 H14" stroke="#fdf0c4" stroke-width="1"/><rect x="0" y="9.3" width="7" height="6.7" fill="#d9293d"/><path d="M1.8 11 L5.2 14.4 M5.2 11 L1.8 14.4" stroke="#fff" stroke-width="1.3"/></svg></span><span class="tx" style="left:66.3px;letter-spacing:-0.333px">src</span></div>
<div class="tr" style="top:269px"><svg class="ar" style="left:47px" width="11" height="9" viewBox="0 0 11 9"><path d="M1.4 2 L5.5 6.1 L9.6 2" fill="none" stroke="#3c3c3c" stroke-width="1.8"/></svg><span class="ic" style="left:64px"><svg width="16" height="16" viewBox="0 0 16 16"><path d="M1.5 13 V4.5 Q1.5 3.5 2.5 3.5 H6 Q7 3.5 7.3 4.5 L7.6 5.5 H12.5 Q13.5 5.5 13.5 6.5 V8.5" fill="#fdf5dc" stroke="#c28d40"/><path d="M1.6 13.5 L4.2 8.5 H15.6 L12.8 13.5 Z" fill="#f8dc92" stroke="#b9853a" stroke-linejoin="round"/><path d="M4.6 9.5 H14" stroke="#fdf0c4" stroke-width="1"/><rect x="0" y="9.3" width="7" height="6.7" fill="#d9293d"/><path d="M1.8 11 L5.2 14.4 M5.2 11 L1.8 14.4" stroke="#fff" stroke-width="1.3"/></svg></span><span class="tx" style="left:85.3px;letter-spacing:0.071px">main</span></div>
<div class="tr" style="top:287px"><svg class="ar" style="left:67px" width="9" height="11" viewBox="0 0 9 11"><path d="M2.8 1.4 L6.9 5.5 L2.8 9.6" fill="none" stroke="#a3a3a3" stroke-width="1.7"/></svg><span class="ic" style="left:83px"><svg width="16" height="16" viewBox="0 0 16 16"><path d="M1.5 13 V4.5 Q1.5 3.5 2.5 3.5 H6 Q7 3.5 7.3 4.5 L7.6 5.5 H12.5 Q13.5 5.5 13.5 6.5 V8.5" fill="#fdf5dc" stroke="#c28d40"/><path d="M1.6 13.5 L4.2 8.5 H15.6 L12.8 13.5 Z" fill="#f8dc92" stroke="#b9853a" stroke-linejoin="round"/><path d="M4.6 9.5 H14" stroke="#fdf0c4" stroke-width="1"/><rect x="0" y="9.3" width="7" height="6.7" fill="#d9293d"/><path d="M1.8 11 L5.2 14.4 M5.2 11 L1.8 14.4" stroke="#fff" stroke-width="1.3"/></svg></span><span class="tx" style="left:104.3px;letter-spacing:-0.231px">sample</span></div>
<div class="tr" style="top:305px"><svg class="ar" style="left:66px" width="11" height="9" viewBox="0 0 11 9"><path d="M1.4 2 L5.5 6.1 L9.6 2" fill="none" stroke="#3c3c3c" stroke-width="1.8"/></svg><span class="ic" style="left:83px"><svg width="16" height="16" viewBox="0 0 16 16"><path d="M1.5 13 V4.5 Q1.5 3.5 2.5 3.5 H6 Q7 3.5 7.3 4.5 L7.6 5.5 H12.5 Q13.5 5.5 13.5 6.5 V8.5" fill="#fdf5dc" stroke="#c28d40"/><path d="M1.6 13.5 L4.2 8.5 H15.6 L12.8 13.5 Z" fill="#f8dc92" stroke="#b9853a" stroke-linejoin="round"/><path d="M4.6 9.5 H14" stroke="#fdf0c4" stroke-width="1"/><rect x="0" y="9.3" width="7" height="6.7" fill="#d9293d"/><path d="M1.8 11 L5.2 14.4 M5.2 11 L1.8 14.4" stroke="#fff" stroke-width="1.3"/></svg></span><span class="tx" style="left:104.3px;letter-spacing:-0.058px">webapp</span></div>
<div class="tr" style="top:323px"><svg class="ar" style="left:86px" width="9" height="11" viewBox="0 0 9 11"><path d="M2.8 1.4 L6.9 5.5 L2.8 9.6" fill="none" stroke="#a3a3a3" stroke-width="1.7"/></svg><span class="ic" style="left:102px"><svg width="16" height="16" viewBox="0 0 16 16"><path d="M1.5 13 V4.5 Q1.5 3.5 2.5 3.5 H6 Q7 3.5 7.3 4.5 L7.6 5.5 H12.5 Q13.5 5.5 13.5 6.5 V8.5" fill="#fdf5dc" stroke="#c28d40"/><path d="M1.6 13.5 L4.2 8.5 H15.6 L12.8 13.5 Z" fill="#f8dc92" stroke="#b9853a" stroke-linejoin="round"/><path d="M4.6 9.5 H14" stroke="#fdf0c4" stroke-width="1"/><path d="M3.6 7.5 Q4.4 7.5 4.8 8.4 L7.3 14.3 Q7.6 15.7 6.2 15.7 H1 Q-0.4 15.7 -0.1 14.3 L2.4 8.4 Q2.8 7.5 3.6 7.5Z" fill="#fbdc74" stroke="#c88a2c" stroke-width="0.9"/><path d="M3.6 10 V13" stroke="#2a2000" stroke-width="1.2"/><rect x="3" y="13.7" width="1.2" height="1.1" fill="#2a2000"/></svg></span><span class="tx" style="left:123.3px;letter-spacing:0.447px">common</span></div>
<div class="tr" style="top:341px"><svg class="ar" style="left:86px" width="9" height="11" viewBox="0 0 9 11"><path d="M2.8 1.4 L6.9 5.5 L2.8 9.6" fill="none" stroke="#a3a3a3" stroke-width="1.7"/></svg><span class="ic" style="left:102px"><svg width="16" height="16" viewBox="0 0 16 16"><path d="M1.5 13 V4.5 Q1.5 3.5 2.5 3.5 H6 Q7 3.5 7.3 4.5 L7.6 5.5 H12.5 Q13.5 5.5 13.5 6.5 V8.5" fill="#fdf5dc" stroke="#c28d40"/><path d="M1.6 13.5 L4.2 8.5 H15.6 L12.8 13.5 Z" fill="#f8dc92" stroke="#b9853a" stroke-linejoin="round"/><path d="M4.6 9.5 H14" stroke="#fdf0c4" stroke-width="1"/></svg></span><span class="tx" style="left:123.3px;letter-spacing:-0.667px">css</span></div>
<div class="tr" style="top:359px"><svg class="ar" style="left:86px" width="9" height="11" viewBox="0 0 9 11"><path d="M2.8 1.4 L6.9 5.5 L2.8 9.6" fill="none" stroke="#a3a3a3" stroke-width="1.7"/></svg><span class="ic" style="left:102px"><svg width="16" height="16" viewBox="0 0 16 16"><path d="M1.5 13 V4.5 Q1.5 3.5 2.5 3.5 H6 Q7 3.5 7.3 4.5 L7.6 5.5 H12.5 Q13.5 5.5 13.5 6.5 V8.5" fill="#fdf5dc" stroke="#c28d40"/><path d="M1.6 13.5 L4.2 8.5 H15.6 L12.8 13.5 Z" fill="#f8dc92" stroke="#b9853a" stroke-linejoin="round"/><path d="M4.6 9.5 H14" stroke="#fdf0c4" stroke-width="1"/></svg></span><span class="tx" style="left:123.3px;letter-spacing:-0.165px">images</span></div>
<div class="tr" style="top:377px"><svg class="ar" style="left:86px" width="9" height="11" viewBox="0 0 9 11"><path d="M2.8 1.4 L6.9 5.5 L2.8 9.6" fill="none" stroke="#a3a3a3" stroke-width="1.7"/></svg><span class="ic" style="left:102px"><svg width="16" height="16" viewBox="0 0 16 16"><path d="M1.5 13 V4.5 Q1.5 3.5 2.5 3.5 H6 Q7 3.5 7.3 4.5 L7.6 5.5 H12.5 Q13.5 5.5 13.5 6.5 V8.5" fill="#fdf5dc" stroke="#c28d40"/><path d="M1.6 13.5 L4.2 8.5 H15.6 L12.8 13.5 Z" fill="#f8dc92" stroke="#b9853a" stroke-linejoin="round"/><path d="M4.6 9.5 H14" stroke="#fdf0c4" stroke-width="1"/></svg></span><span class="tx" style="left:123.3px;letter-spacing:-0.335px">META-INF</span></div>
<div class="tr" style="top:395px"><svg class="ar" style="left:86px" width="9" height="11" viewBox="0 0 9 11"><path d="M2.8 1.4 L6.9 5.5 L2.8 9.6" fill="none" stroke="#a3a3a3" stroke-width="1.7"/></svg><span class="ic" style="left:102px"><svg width="16" height="16" viewBox="0 0 16 16"><path d="M1.5 13 V4.5 Q1.5 3.5 2.5 3.5 H6 Q7 3.5 7.3 4.5 L7.6 5.5 H12.5 Q13.5 5.5 13.5 6.5 V8.5" fill="#fdf5dc" stroke="#c28d40"/><path d="M1.6 13.5 L4.2 8.5 H15.6 L12.8 13.5 Z" fill="#f8dc92" stroke="#b9853a" stroke-linejoin="round"/><path d="M4.6 9.5 H14" stroke="#fdf0c4" stroke-width="1"/><rect x="0" y="9.3" width="7" height="6.7" fill="#d9293d"/><path d="M1.8 11 L5.2 14.4 M5.2 11 L1.8 14.4" stroke="#fff" stroke-width="1.3"/></svg></span><span class="tx" style="left:123.3px;letter-spacing:-0.231px">sample</span></div>
<div class="tr" style="top:413px"><svg class="ar" style="left:85px" width="11" height="9" viewBox="0 0 11 9"><path d="M1.4 2 L5.5 6.1 L9.6 2" fill="none" stroke="#3c3c3c" stroke-width="1.8"/></svg><span class="ic" style="left:102px"><svg width="16" height="16" viewBox="0 0 16 16"><path d="M1.5 13 V4.5 Q1.5 3.5 2.5 3.5 H6 Q7 3.5 7.3 4.5 L7.6 5.5 H12.5 Q13.5 5.5 13.5 6.5 V8.5" fill="#fdf5dc" stroke="#c28d40"/><path d="M1.6 13.5 L4.2 8.5 H15.6 L12.8 13.5 Z" fill="#f8dc92" stroke="#b9853a" stroke-linejoin="round"/><path d="M4.6 9.5 H14" stroke="#fdf0c4" stroke-width="1"/><path d="M3.6 7.5 Q4.4 7.5 4.8 8.4 L7.3 14.3 Q7.6 15.7 6.2 15.7 H1 Q-0.4 15.7 -0.1 14.3 L2.4 8.4 Q2.8 7.5 3.6 7.5Z" fill="#fbdc74" stroke="#c88a2c" stroke-width="0.9"/><path d="M3.6 10 V13" stroke="#2a2000" stroke-width="1.2"/><rect x="3" y="13.7" width="1.2" height="1.1" fill="#2a2000"/></svg></span><span class="tx" style="left:123.3px;letter-spacing:-0.639px">WEB-INF</span></div>
<div class="tr" style="top:431px"><svg class="ar" style="left:104px" width="11" height="9" viewBox="0 0 11 9"><path d="M1.4 2 L5.5 6.1 L9.6 2" fill="none" stroke="#3c3c3c" stroke-width="1.8"/></svg><span class="ic" style="left:121px"><svg width="16" height="16" viewBox="0 0 16 16"><path d="M1.5 13 V4.5 Q1.5 3.5 2.5 3.5 H6 Q7 3.5 7.3 4.5 L7.6 5.5 H12.5 Q13.5 5.5 13.5 6.5 V8.5" fill="#fdf5dc" stroke="#c28d40"/><path d="M1.6 13.5 L4.2 8.5 H15.6 L12.8 13.5 Z" fill="#f8dc92" stroke="#b9853a" stroke-linejoin="round"/><path d="M4.6 9.5 H14" stroke="#fdf0c4" stroke-width="1"/></svg></span><span class="tx" style="left:142.3px;letter-spacing:0.111px">config</span></div>
<div class="tr" style="top:449px"><svg class="ar" style="left:123px" width="11" height="9" viewBox="0 0 11 9"><path d="M1.4 2 L5.5 6.1 L9.6 2" fill="none" stroke="#3c3c3c" stroke-width="1.8"/></svg><span class="ic" style="left:140px"><svg width="16" height="16" viewBox="0 0 16 16"><path d="M1.5 13 V4.5 Q1.5 3.5 2.5 3.5 H6 Q7 3.5 7.3 4.5 L7.6 5.5 H12.5 Q13.5 5.5 13.5 6.5 V8.5" fill="#fdf5dc" stroke="#c28d40"/><path d="M1.6 13.5 L4.2 8.5 H15.6 L12.8 13.5 Z" fill="#f8dc92" stroke="#b9853a" stroke-linejoin="round"/><path d="M4.6 9.5 H14" stroke="#fdf0c4" stroke-width="1"/></svg></span><span class="tx" style="left:161.3px;letter-spacing:-0.025px">egovframework</span></div>
<div class="tr" style="top:467px"><svg class="ar" style="left:142px" width="11" height="9" viewBox="0 0 11 9"><path d="M1.4 2 L5.5 6.1 L9.6 2" fill="none" stroke="#3c3c3c" stroke-width="1.8"/></svg><span class="ic" style="left:159px"><svg width="16" height="16" viewBox="0 0 16 16"><path d="M1.5 13 V4.5 Q1.5 3.5 2.5 3.5 H6 Q7 3.5 7.3 4.5 L7.6 5.5 H12.5 Q13.5 5.5 13.5 6.5 V8.5" fill="#fdf5dc" stroke="#c28d40"/><path d="M1.6 13.5 L4.2 8.5 H15.6 L12.8 13.5 Z" fill="#f8dc92" stroke="#b9853a" stroke-linejoin="round"/><path d="M4.6 9.5 H14" stroke="#fdf0c4" stroke-width="1"/></svg></span><span class="tx" style="left:180.3px;letter-spacing:0.035px">springmvc</span></div>
<div class="tr" style="top:485px"><i class="selbg" style="left:176px"></i><span class="ic" style="left:178px"><svg width="16" height="16" viewBox="0 0 16 16"><defs><linearGradient id="gxm" x1="0" y1="0" x2="0" y2="1"><stop offset="0.3" stop-color="#ffffff"/><stop offset="1" stop-color="#d4e4f2"/></linearGradient></defs><path d="M2.5 1.5 H9.5 L13.5 5 V14.5 H2.5 Z" fill="url(#gxm)" stroke="#9db4cc"/><path d="M2.5 8 V1.5 H9.5" fill="none" stroke="#cdb088"/><path d="M2.5 14.8 H13.5" stroke="#7f9ec0" stroke-width="1.2"/><path d="M9.5 1.5 V5 H13.5Z" fill="#f4b070" stroke="#e8a868" stroke-width="0.6"/><path d="M10.6 6.6 H7 Q4.6 6.6 4.6 9.3 Q4.6 12 7 12 H10.6 M10.6 5.8 V12.6" fill="none" stroke="#4c8c22" stroke-width="1.25"/></svg></span><span class="tx" style="left:199.5px;letter-spacing:-0.05px">dispatcher-servlet.xml</span></div>
<div class="tr" style="top:503px"><svg class="ar" style="left:143px" width="9" height="11" viewBox="0 0 9 11"><path d="M2.8 1.4 L6.9 5.5 L2.8 9.6" fill="none" stroke="#a3a3a3" stroke-width="1.7"/></svg><span class="ic" style="left:159px"><svg width="16" height="16" viewBox="0 0 16 16"><path d="M1.5 13 V4.5 Q1.5 3.5 2.5 3.5 H6 Q7 3.5 7.3 4.5 L7.6 5.5 H12.5 Q13.5 5.5 13.5 6.5 V8.5" fill="#fdf5dc" stroke="#c28d40"/><path d="M1.6 13.5 L4.2 8.5 H15.6 L12.8 13.5 Z" fill="#f8dc92" stroke="#b9853a" stroke-linejoin="round"/><path d="M4.6 9.5 H14" stroke="#fdf0c4" stroke-width="1"/></svg></span><span class="tx" style="left:180.3px;letter-spacing:-0.073px">validator</span></div>
<div class="tr" style="top:521px"><svg class="ar" style="left:105px" width="9" height="11" viewBox="0 0 9 11"><path d="M2.8 1.4 L6.9 5.5 L2.8 9.6" fill="none" stroke="#a3a3a3" stroke-width="1.7"/></svg><span class="ic" style="left:121px"><svg width="16" height="16" viewBox="0 0 16 16"><path d="M1.5 13 V4.5 Q1.5 3.5 2.5 3.5 H6 Q7 3.5 7.3 4.5 L7.6 5.5 H12.5 Q13.5 5.5 13.5 6.5 V8.5" fill="#fdf5dc" stroke="#c28d40"/><path d="M1.6 13.5 L4.2 8.5 H15.6 L12.8 13.5 Z" fill="#f8dc92" stroke="#b9853a" stroke-linejoin="round"/><path d="M4.6 9.5 H14" stroke="#fdf0c4" stroke-width="1"/><path d="M3.6 7.5 Q4.4 7.5 4.8 8.4 L7.3 14.3 Q7.6 15.7 6.2 15.7 H1 Q-0.4 15.7 -0.1 14.3 L2.4 8.4 Q2.8 7.5 3.6 7.5Z" fill="#fbdc74" stroke="#c88a2c" stroke-width="0.9"/><path d="M3.6 10 V13" stroke="#2a2000" stroke-width="1.2"/><rect x="3" y="13.7" width="1.2" height="1.1" fill="#2a2000"/></svg></span><span class="tx" style="left:142.3px;letter-spacing:-0.215px">jsp</span></div>
<div class="tr" style="top:539px"><span class="ic" style="left:121px"><svg width="16" height="16" viewBox="0 0 16 16"><path d="M1.5 13 V4.5 Q1.5 3.5 2.5 3.5 H6 Q7 3.5 7.3 4.5 L7.6 5.5 H12.5 Q13.5 5.5 13.5 6.5 V8.5" fill="#fdf5dc" stroke="#c28d40"/><path d="M1.6 13.5 L4.2 8.5 H15.6 L12.8 13.5 Z" fill="#f8dc92" stroke="#b9853a" stroke-linejoin="round"/><path d="M4.6 9.5 H14" stroke="#fdf0c4" stroke-width="1"/></svg></span><span class="tx" style="left:142.3px;letter-spacing:0.195px">lib</span></div>
<div class="tr" style="top:557px"><span class="ic" style="left:121px"><svg width="16" height="16" viewBox="0 0 16 16"><defs><linearGradient id="gxm" x1="0" y1="0" x2="0" y2="1"><stop offset="0.3" stop-color="#ffffff"/><stop offset="1" stop-color="#d4e4f2"/></linearGradient></defs><path d="M2.5 1.5 H9.5 L13.5 5 V14.5 H2.5 Z" fill="url(#gxm)" stroke="#9db4cc"/><path d="M2.5 8 V1.5 H9.5" fill="none" stroke="#cdb088"/><path d="M2.5 14.8 H13.5" stroke="#7f9ec0" stroke-width="1.2"/><path d="M9.5 1.5 V5 H13.5Z" fill="#f4b070" stroke="#e8a868" stroke-width="0.6"/><path d="M10.6 6.6 H7 Q4.6 6.6 4.6 9.3 Q4.6 12 7 12 H10.6 M10.6 5.8 V12.6" fill="none" stroke="#4c8c22" stroke-width="1.25"/></svg></span><span class="tx" style="left:142.3px;letter-spacing:0.055px">web.xml</span></div>
<div class="tr" style="top:575px"><span class="ic" style="left:102px"><svg width="16" height="16" viewBox="0 0 16 16"><path d="M3.5 1.5 H10.5 L13.5 4.5 V14.5 H3.5 Z" fill="#fffefa" stroke="#b0a478"/><path d="M10.5 1.5 V4.5 H13.5" fill="#fff" stroke="#b0a478" stroke-width="0.8"/><path d="M5.5 6.5 H8" stroke="#d04040" stroke-width="1"/><path d="M8.5 6.5 H11.5 M5.5 8.5 H10.5" stroke="#5b8fd0" stroke-width="1"/><path d="M5.5 10.5 H8" stroke="#d04040" stroke-width="1"/><path d="M8.5 10.5 H11" stroke="#5b8fd0" stroke-width="1"/><path d="M5.5 12.5 H10.5" stroke="#50a050" stroke-width="1"/></svg></span><span class="tx" style="left:123.3px;letter-spacing:-0.097px">index.jsp</span></div>
<div class="tr" style="top:593px"><span class="ic" style="left:64px"><svg width="16" height="16" viewBox="0 0 16 16"><path d="M1.5 13 V4.5 Q1.5 3.5 2.5 3.5 H6 Q7 3.5 7.3 4.5 L7.6 5.5 H12.5 Q13.5 5.5 13.5 6.5 V8.5" fill="#fdf5dc" stroke="#c28d40"/><path d="M1.6 13.5 L4.2 8.5 H15.6 L12.8 13.5 Z" fill="#f8dc92" stroke="#b9853a" stroke-linejoin="round"/><path d="M4.6 9.5 H14" stroke="#fdf0c4" stroke-width="1"/></svg></span><span class="tx" style="left:85.3px;letter-spacing:-0.236px">test</span></div>
<div class="tr" style="top:611px"><svg class="ar" style="left:29px" width="9" height="11" viewBox="0 0 9 11"><path d="M2.8 1.4 L6.9 5.5 L2.8 9.6" fill="none" stroke="#a3a3a3" stroke-width="1.7"/></svg><span class="ic" style="left:45px"><svg width="16" height="16" viewBox="0 0 16 16"><path d="M1.5 13 V4.5 Q1.5 3.5 2.5 3.5 H6 Q7 3.5 7.3 4.5 L7.6 5.5 H12.5 Q13.5 5.5 13.5 6.5 V8.5" fill="#fdf5dc" stroke="#c28d40"/><path d="M1.6 13.5 L4.2 8.5 H15.6 L12.8 13.5 Z" fill="#f8dc92" stroke="#b9853a" stroke-linejoin="round"/><path d="M4.6 9.5 H14" stroke="#fdf0c4" stroke-width="1"/></svg></span><span class="tx" style="left:66.3px;letter-spacing:-0.065px">target</span></div>
<div class="tr" style="top:629px"><span class="ic" style="left:45px"><svg width="16" height="16" viewBox="0 0 16 16"><path d="M3.5 1.5 H10 L13.5 5 V14.5 H3.5 Z" fill="#fffefa" stroke="#b4a070"/><path d="M10 1.5 V5 H13.5" fill="#fff" stroke="#b4a070" stroke-width="0.8"/><path d="M5.3 12.6 V7.8 L8.5 11.4 L11.7 7.8 V12.6" fill="none" stroke="#1c4c94" stroke-width="1.5" stroke-linejoin="bevel"/></svg></span><span class="tx" style="left:66.3px;letter-spacing:0.208px">pom.xml</span></div>
<div class="tr" style="top:647px"><svg class="ar" style="left:10px" width="9" height="11" viewBox="0 0 9 11"><path d="M2.8 1.4 L6.9 5.5 L2.8 9.6" fill="none" stroke="#a3a3a3" stroke-width="1.7"/></svg><span class="ic" style="left:26px"><svg width="16" height="16" viewBox="0 0 16 16"><path d="M4.5 4.5 V2.8 Q4.5 1.8 5.5 1.8 H9 Q10 1.8 10 2.8 V4.5" fill="#fbe8a0" stroke="#d8b860" stroke-width="0.8"/><path d="M1.5 5 H14.5 L13.5 14 H2.5Z" fill="#f4e4b0" stroke="#5c4c6c" stroke-width="1.2"/></svg></span><span class="tx" style="left:47.3px;letter-spacing:-0.592px">Servers</span></div>
</div>
<div id="ed"></div>
<div id="edstrip"></div>
<div id="edtab"></div>
<svg style="left:491.8px;top:83.6px" width="11" height="11" viewBox="0 0 11 11"><path d="M0.6 2.4 L2.4 0.6 L5.25 3.3 L8.1 0.6 L9.9 2.4 L7.2 5.25 L9.9 8.1 L8.1 9.9 L5.25 7.2 L2.4 9.9 L0.6 8.1 L3.3 5.25Z" fill="#fff" stroke="#3e3e3e" stroke-width="1" stroke-linejoin="miter"/></svg>
<span class="ic" style="left:347.6px;top:80px;width:16px;height:16px"><svg width="16" height="16" viewBox="0 0 16 16"><defs><linearGradient id="gxm" x1="0" y1="0" x2="0" y2="1"><stop offset="0.3" stop-color="#ffffff"/><stop offset="1" stop-color="#d4e4f2"/></linearGradient></defs><path d="M2.5 1.5 H9.5 L13.5 5 V14.5 H2.5 Z" fill="url(#gxm)" stroke="#9db4cc"/><path d="M2.5 8 V1.5 H9.5" fill="none" stroke="#cdb088"/><path d="M2.5 14.8 H13.5" stroke="#7f9ec0" stroke-width="1.2"/><path d="M9.5 1.5 V5 H13.5Z" fill="#f4b070" stroke="#e8a868" stroke-width="0.6"/><path d="M10.6 6.6 H7 Q4.6 6.6 4.6 9.3 Q4.6 12 7 12 H10.6 M10.6 5.8 V12.6" fill="none" stroke="#4c8c22" stroke-width="1.25"/></svg></span>
<span class="tx" style="left:367.6px;top:80px">dispatcher-servlet.xml</span>
<div id="ruler"></div><div id="lnsep"></div>
<div id="curline"></div>
<div id="mark"></div>
<div class="ln" style="top:104px">37</div>
<div class="cl" style="top:104px;left:412px"><span class="b">&lt;/</span><span class="t">bean</span><span class="b">&gt;</span></div>
<div class="ln" style="top:119px">38</div>
<div class="ln" style="top:134px">39</div>
<div class="cl" style="top:134px;left:412px"><span class="c">&lt;!-- <span class="k" style="width:74.5px">넥사크로플랫폼 </span>EXCEPTION-RESOLVER <span class="k" style="width:24.5px">등록 </span>--&gt;</span></div>
<div class="ln" style="top:149px">40</div>
<div class="cl" style="top:149px;left:412px"><span class="b">&lt;</span><span class="t">bean</span> <span class="a">id</span>=<span class="v">"exceptionResolver"</span> <span class="a">class</span>=<span class="v">"com.nexacro.uiadapter17.spring.core.resolve.NexacroMappingExceptionResolver"</span><span class="b">&gt;</span></div>
<div class="ln" style="top:164px">41</div>
<div class="cl" style="top:164px;left:440px"><span class="b">&lt;</span><span class="t">property</span> <span class="a">name</span>=<span class="v">"view"</span> <span class="a">ref</span>=<span class="v">"nexacroView"</span> <span class="b">/&gt;</span></div>
<div class="ln" style="top:179px">42</div>
<div class="cl" style="top:179px;left:440px"><span class="b">&lt;</span><span class="t">property</span> <span class="a">name</span>=<span class="v">"shouldLogStackTrace"</span> <span class="a">value</span>=<span class="v">"true"</span> <span class="b">/&gt;</span></div>
<div class="ln" style="top:194px">43</div>
<div class="cl" style="top:194px;left:440px"><span class="b">&lt;</span><span class="t">property</span> <span class="a">name</span>=<span class="v">"shouldSendStackTrace"</span> <span class="a">value</span>=<span class="v">"false"</span> <span class="b">/&gt;</span></div>
<div class="ln" style="top:209px">44</div>
<div class="cl" style="top:209px;left:440px"><span class="c">&lt;!-- shouldSendStackTrace <span class="k" style="width:14.8px">가 </span>false <span class="k" style="width:13px">일 </span><span class="k" style="width:23.7px">경우 </span>nexacro platform<span class="k" style="width:24.3px">으로 </span><span class="k" style="width:43.8px">전송되는 </span><span class="k" style="width:59.1px">에러메시지 </span>--&gt;</span></div>
<div class="ln" style="top:224px">45</div>
<div class="cl" style="top:224px;left:440px"><span class="c">&lt;!-- &lt;property name="defaultErrorMsg" value="An Error Occured. check the ErrorCode for detail of error infomation" /&gt; --&gt;</span></div>
<div class="ln" style="top:239px">46</div>
<div class="cl" style="top:239px;left:440px"><span class="b">&lt;</span><span class="t">property</span> <span class="a">name</span>=<span class="v">"defaultErrorMsg"</span> <span class="a">value</span>=<span class="v">"fail.common.msg"</span> <span class="b">/&gt;</span></div>
<div class="ln" style="top:254px">47</div>
<div class="cl" style="top:254px;left:440px"><span class="b">&lt;</span><span class="t">property</span> <span class="a">name</span>=<span class="v">"messageSource"</span> <span class="a">ref</span>=<span class="v">"messageSource"</span> <span class="b">/&gt;</span></div>
<div class="ln" style="top:269px">48</div>
<div class="cl" style="top:269px;left:412px"><span class="b">&lt;/</span><span class="t">bean</span><span class="b">&gt;</span></div>
<div class="ln" style="top:284px">49</div>
<div class="cl" style="top:284px;left:412px"><span class="c">&lt;!-- /////////////////////////////////// <span class="k" style="width:74.4px">넥사크로플랫폼 </span>UIADAPTER17 <span class="k" style="width:23px">설정 </span><span class="k" style="width:15.1px">끝 </span>/////////////////////////////////// --&gt;</span></div>
<div class="ln" style="top:299px">50</div>
<div class="ln" style="top:314px">51</div>
<div class="cl" style="top:314px;left:412px"><span class="c">&lt;!-- /////////////////////////////////// XENI REQUEST MAPPING <span class="k" style="width:24.3px">시작 </span>/////////////////////////////////// --&gt;</span></div>
<div class="ln" style="top:329px">52</div>
<div class="cl" style="top:329px;left:412px"><span class="b">&lt;</span><span class="t">bean</span> <span class="a">class</span>=<span class="v">"org.springframework.web.servlet.mvc.SimpleControllerHandlerAdapter"</span> <span class="b">/&gt;</span></div>
<div class="ln" style="top:344px">53</div>
<div class="cl" style="top:344px;left:412px"><span class="b">&lt;</span><span class="t">bean</span> <span class="a">id</span>=<span class="v">"xeniUrlMapping"</span> <span class="a">class</span>=<span class="v">"org.springframework.web.servlet.handler.SimpleUrlHandlerMapping"</span> <span class="a">p:order</span>=<span class="v">"0"</span><span class="b">&gt;</span></div>
<div class="ln" style="top:359px">54</div>
<div class="cl" style="top:359px;left:440px"><span class="b">&lt;</span><span class="t">property</span> <span class="a">name</span>=<span class="v">"mappings"</span><span class="b">&gt;</span></div>
<div class="ln" style="top:374px">55</div>
<div class="cl" style="top:374px;left:468px"><span class="b">&lt;</span><span class="t">props</span><span class="b">&gt;</span></div>
<div class="ln" style="top:389px">56</div>
<div class="cl" style="top:389px;left:496px"><span class="b">&lt;</span><span class="t">prop</span> <span class="a">key</span>=<span class="v">"/XExportImport.do"</span><span class="b">&gt;</span>xeniWrappingController<span class="b">&lt;/</span><span class="t">prop</span><span class="b">&gt;</span></div>
<div class="ln" style="top:404px">57</div>
<div class="cl" style="top:404px;left:468px"><span class="b">&lt;/</span><span class="t">props</span><span class="b">&gt;</span></div>
<div class="ln" style="top:419px">58</div>
<div class="cl" style="top:419px;left:440px"><span class="b">&lt;/</span><span class="t">property</span><span class="b">&gt;</span></div>
<div class="ln" style="top:434px">59</div>
<div class="cl" style="top:434px;left:412px"><span class="b">&lt;/</span><span class="t">bean</span><span class="b">&gt;</span></div>
<div class="ln" style="top:449px">60</div>
<div class="cl" style="top:449px;left:412px"><span class="b">&lt;</span><span class="t">bean</span> <span class="a">id</span>=<span class="v">"xeniWrappingController"</span> <span class="a">class</span>=<span class="v">"org.springframework.web.servlet.mvc.ServletWrappingController"</span><span class="b">&gt;</span></div>
<div class="ln" style="top:464px">61</div>
<div class="cl" style="top:464px;left:440px"><span class="b">&lt;</span><span class="t">property</span> <span class="a">name</span>=<span class="v">"servletClass"</span><span class="b">&gt;</span></div>
<div class="ln" style="top:479px">62</div>
<div class="cl" style="top:479px;left:468px"><span class="b">&lt;</span><span class="t">value</span><span class="b">&gt;</span>com.nexacro17.xeni.services.GridExportImportServlet<span class="b">&lt;/</span><span class="t">value</span><span class="b">&gt;</span></div>
<div class="ln" style="top:494px">63</div>
<div class="cl" style="top:494px;left:440px"><span class="b">&lt;/</span><span class="t">property</span><span class="b">&gt;</span></div>
<div class="ln" style="top:509px">64</div>
<div class="cl" style="top:509px;left:412px"><span class="b">&lt;/</span><span class="t">bean</span><span class="b">&gt;</span></div>
<div class="ln" style="top:524px">65</div>
<div class="ln" style="top:539px">66</div>
<div class="cl" style="top:539px;left:412px"><span class="c">&lt;!-- Multipart Resolver <span class="k" style="width:24px">최대 </span>10<span class="k" style="width:23px">메가 </span><span class="k" style="width:30px">바이트</span>(<span class="k" style="width:20px">대략</span>) <span class="k" style="width:24.4px">까지 </span><span class="k" style="width:43.6px">업로드가 </span><span class="k" style="width:55px">가능하도록 </span><span class="k" style="width:23px">설정 </span>( <span class="k" style="width:54.4px">해당설정이 </span><span class="k" style="width:34.1px">없으면 </span>xeni Import <span class="k" style="width:43px">할수없음 </span>) --&gt;</span></div>
<div class="ln" style="top:554px">67</div>
<div class="cl" style="top:554px;left:412px"><span class="b">&lt;</span><span class="t">bean</span> <span class="a">id</span>=<span class="v">"multipartResolver"</span> <span class="a">class</span>=<span class="v">"org.springframework.web.multipart.commons.CommonsMultipartResolver"</span><span class="b">&gt;</span></div>
<div class="ln" style="top:569px">68</div>
<div class="cl" style="top:569px;left:440px"><span class="b">&lt;</span><span class="t">property</span> <span class="a">name</span>=<span class="v">"maxUploadSize"</span> <span class="a">value</span>=<span class="v">"100000000"</span> <span class="b">/&gt;</span></div>
<div class="ln" style="top:584px">69</div>
<div class="cl" style="top:584px;left:440px"><span class="b">&lt;</span><span class="t">property</span> <span class="a">name</span>=<span class="v">"maxInMemorySize"</span> <span class="a">value</span>=<span class="v">"100000000"</span> <span class="b">/&gt;</span></div>
<div class="ln" style="top:599px">70</div>
<div class="cl" style="top:599px;left:412px"><span class="b">&lt;/</span><span class="t">bean</span><span class="b">&gt;</span></div>
<div class="ln" style="top:614px">71</div>
<div class="cl" style="top:614px;left:412px"><span class="c">&lt;!-- /////////////////////////////////// XENI REQUEST MAPPING <span class="k" style="width:13.7px">끝 </span>/////////////////////////////////// --&gt;</span></div>
<div class="ln" style="top:629px">72</div>
<div class="ln" style="top:644px">73</div>
<div class="cl" style="top:644px;left:384px"><span class="b">&lt;/</span><span class="t">beans</span><span class="b">&gt;</span></div>
<div id="red"></div>
</body></html>
